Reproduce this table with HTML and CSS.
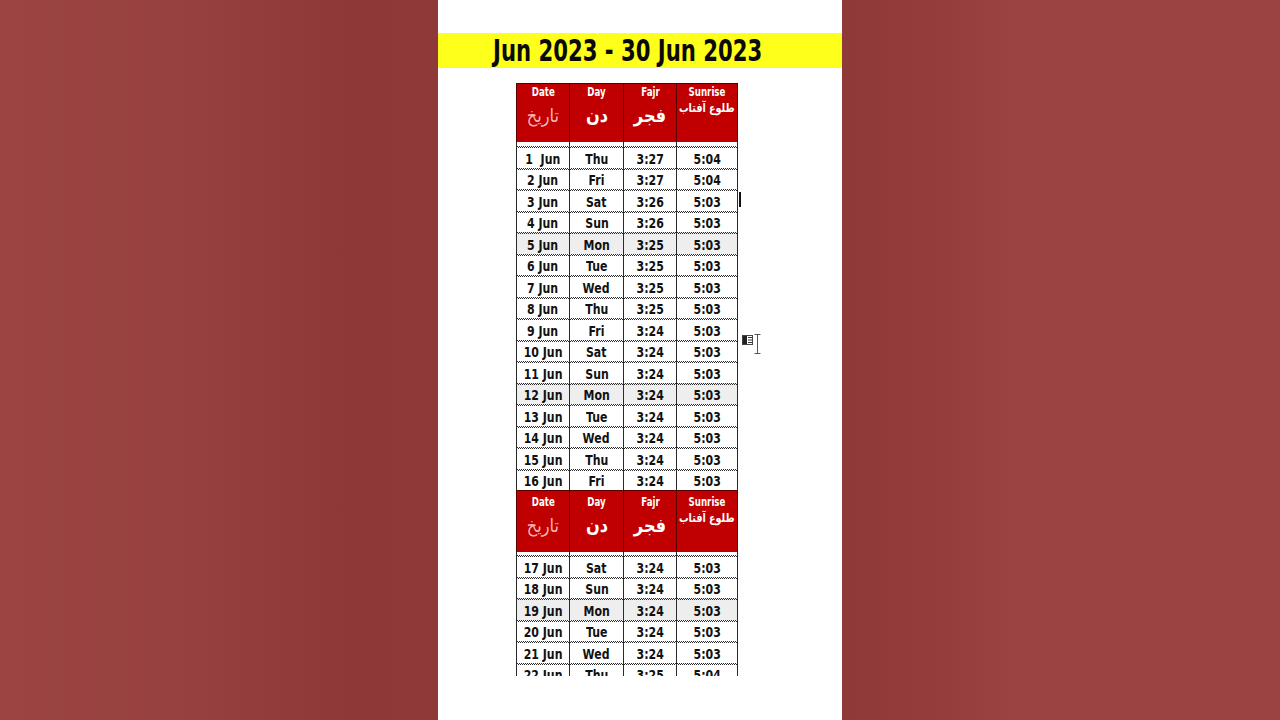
FILE: index.html
```html
<!DOCTYPE html>
<html lang="en">
<head>
<meta charset="utf-8">
<title>Prayer times June 2023</title>
<link rel="stylesheet" href="styles.css">
</head>
<body>
<div class="screen">
  <div class="side side-left"></div>
  <div class="panel">
    <div class="band"><span class="title">Jun 2023 - 30 Jun 2023</span></div>
    <div class="sheet">
      <div class="head">
        <div class="hc"><span class="en">Date</span><span class="ar ar-thin">تاریخ</span></div>
        <div class="hc"><span class="en">Day</span><span class="ar">دن</span></div>
        <div class="hc"><span class="en">Fajr</span><span class="ar">فجر</span></div>
        <div class="hc"><span class="en">Sunrise</span><span class="ar ar-small">طلوع آفتاب</span></div>
      </div>
      <div class="gap"><div></div><div></div><div></div><div></div></div>
      <div class="row"><div><span>1&nbsp;&nbsp;Jun</span></div><div><span>Thu</span></div><div><span>3:27</span></div><div><span>5:04</span></div></div>
      <div class="row"><div><span>2 Jun</span></div><div><span>Fri</span></div><div><span>3:27</span></div><div><span>5:04</span></div></div>
      <div class="row"><div><span>3 Jun</span></div><div><span>Sat</span></div><div><span>3:26</span></div><div><span>5:03</span></div></div>
      <div class="row"><div><span>4 Jun</span></div><div><span>Sun</span></div><div><span>3:26</span></div><div><span>5:03</span></div></div>
      <div class="row shade"><div><span>5 Jun</span></div><div><span>Mon</span></div><div><span>3:25</span></div><div><span>5:03</span></div></div>
      <div class="row"><div><span>6 Jun</span></div><div><span>Tue</span></div><div><span>3:25</span></div><div><span>5:03</span></div></div>
      <div class="row"><div><span>7 Jun</span></div><div><span>Wed</span></div><div><span>3:25</span></div><div><span>5:03</span></div></div>
      <div class="row"><div><span>8 Jun</span></div><div><span>Thu</span></div><div><span>3:25</span></div><div><span>5:03</span></div></div>
      <div class="row"><div><span>9 Jun</span></div><div><span>Fri</span></div><div><span>3:24</span></div><div><span>5:03</span></div></div>
      <div class="row"><div><span>10 Jun</span></div><div><span>Sat</span></div><div><span>3:24</span></div><div><span>5:03</span></div></div>
      <div class="row"><div><span>11 Jun</span></div><div><span>Sun</span></div><div><span>3:24</span></div><div><span>5:03</span></div></div>
      <div class="row shade"><div><span>12 Jun</span></div><div><span>Mon</span></div><div><span>3:24</span></div><div><span>5:03</span></div></div>
      <div class="row"><div><span>13 Jun</span></div><div><span>Tue</span></div><div><span>3:24</span></div><div><span>5:03</span></div></div>
      <div class="row"><div><span>14 Jun</span></div><div><span>Wed</span></div><div><span>3:24</span></div><div><span>5:03</span></div></div>
      <div class="row"><div><span>15 Jun</span></div><div><span>Thu</span></div><div><span>3:24</span></div><div><span>5:03</span></div></div>
      <div class="row"><div><span>16 Jun</span></div><div><span>Fri</span></div><div><span>3:24</span></div><div><span>5:03</span></div></div>
      <div class="head head-2">
        <div class="hc"><span class="en">Date</span><span class="ar ar-thin">تاریخ</span></div>
        <div class="hc"><span class="en">Day</span><span class="ar">دن</span></div>
        <div class="hc"><span class="en">Fajr</span><span class="ar">فجر</span></div>
        <div class="hc"><span class="en">Sunrise</span><span class="ar ar-small">طلوع آفتاب</span></div>
      </div>
      <div class="gap gap-2"><div></div><div></div><div></div><div></div></div>
      <div class="row"><div><span>17 Jun</span></div><div><span>Sat</span></div><div><span>3:24</span></div><div><span>5:03</span></div></div>
      <div class="row"><div><span>18 Jun</span></div><div><span>Sun</span></div><div><span>3:24</span></div><div><span>5:03</span></div></div>
      <div class="row shade"><div><span>19 Jun</span></div><div><span>Mon</span></div><div><span>3:24</span></div><div><span>5:03</span></div></div>
      <div class="row"><div><span>20 Jun</span></div><div><span>Tue</span></div><div><span>3:24</span></div><div><span>5:03</span></div></div>
      <div class="row"><div><span>21 Jun</span></div><div><span>Wed</span></div><div><span>3:24</span></div><div><span>5:03</span></div></div>
      <div class="row"><div><span>22 Jun</span></div><div><span>Thu</span></div><div><span>3:25</span></div><div><span>5:04</span></div></div>
    </div>
    <span class="caret"></span>
    <span class="paste-icon">
      <svg width="11" height="10" viewBox="0 0 11 10">
        <rect x="0.5" y="0.5" width="10" height="9" fill="#fff" stroke="#444"/>
        <rect x="1" y="1" width="4" height="8" fill="#222"/>
        <path d="M6 2.5h4M6 5h4M6 7.5h4" stroke="#333" stroke-width="1"/>
      </svg>
    </span>
    <span class="ibeam">
      <svg width="7" height="20" viewBox="0 0 7 20">
        <path d="M0.5 0.5h6M3.5 0.5v19M0.5 19.5h6" stroke="#555" stroke-width="1" fill="none"/>
      </svg>
    </span>
  </div>
  <div class="side side-right"></div>
</div>
</body>
</html>
```

FILE: styles.css
```css
* { box-sizing: border-box; }

html, body {
  margin: 0;
  padding: 0;
}

body {
  width: 1280px;
  height: 720px;
  overflow: hidden;
  font-family: "DejaVu Sans Condensed", "DejaVu Sans", sans-serif;
}

.screen {
  display: flex;
  width: 1280px;
  height: 720px;
}

.side {
  width: 438px;
  height: 720px;
  flex: none;
}

.side-left {
  background: linear-gradient(to right, #9b4442 0%, #974140 40%, #8e3838 80%, #8f3938 100%);
}

.side-right {
  background: linear-gradient(to right, #8f3938 0%, #933c3b 20%, #9a4342 40%, #9a4342 100%);
}

.panel {
  position: relative;
  width: 404px;
  height: 720px;
  flex: none;
  background: #ffffff;
  overflow: hidden;
}

.band {
  margin-top: 33px;
  height: 35px;
  background: #ffff1c;
  padding-left: 55px;
  display: flex;
  align-items: center;
}

.title {
  display: inline-block;
  font-family: "DejaVu Sans Condensed", "DejaVu Sans", sans-serif;
  font-weight: bold;
  font-size: 30px;
  line-height: 35px;
  color: #0a0a0a;
  transform: scaleX(0.785);
  transform-origin: left center;
  white-space: nowrap;
}

.sheet {
  margin-top: 15px;
  margin-left: 78px;
  width: 222px;
  height: 593px;
  overflow: hidden;
}

.head,
.gap,
.row {
  display: grid;
  grid-template-columns: 53px 54px 53px 62px;
}

.head {
  height: 59px;
  background: #c00000;
  border-top: 1px solid #5a0000;
}

.head-2 {
  height: 62px;
}

.hc {
  display: flex;
  flex-direction: column;
  align-items: center;
  border-left: 1px solid #5a0000;
  padding-top: 1px;
  color: #ffffff;
}

.head-2 .hc {
  padding-top: 4px;
}

.hc:last-child {
  border-right: 1px solid #5a0000;
}

.en {
  display: inline-block;
  font-weight: bold;
  font-size: 12px;
  line-height: 15px;
  transform: scaleX(0.8);
  white-space: nowrap;
}

.ar {
  display: inline-block;
  font-family: "DejaVu Sans", sans-serif;
  font-weight: bold;
  font-size: 19px;
  line-height: 26px;
  margin-top: 2px;
  white-space: nowrap;
  direction: rtl;
  transform: scaleX(0.85);
}

.ar-thin {
  font-weight: normal;
  color: #f5b4b4;
}

.ar-small {
  font-size: 12px;
  line-height: 16px;
  margin-top: 0;
  transform: scaleX(0.8);
}

.gap {
  height: 4px;
}

.gap-2 {
  height: 3px;
}

.gap > div,
.row > div {
  border-left: 1px solid #2a2a2a;
}

.gap > div:last-child,
.row > div:last-child {
  border-right: 1px solid #2a2a2a;
}

.row {
  height: 21.5px;
  background-image: repeating-conic-gradient(#2a2a2a 0 25%, transparent 0 50%);
  background-size: 2px 2px;
  background-repeat: repeat-x;
  background-position: 0 0;
  background-color: #ffffff;
}

.row.shade {
  background-color: #eeeeee;
}

.row > div {
  display: flex;
  align-items: center;
  justify-content: center;
  padding-top: 4px;
}

.row span {
  display: inline-block;
  font-weight: bold;
  font-size: 14.5px;
  line-height: 16px;
  color: #111111;
  transform: scaleX(0.84);
  white-space: nowrap;
}

.caret {
  position: absolute;
  left: 301px;
  top: 192px;
  width: 2px;
  height: 15px;
  background: #111111;
}

.paste-icon {
  position: absolute;
  left: 304px;
  top: 335px;
  width: 11px;
  height: 10px;
  display: block;
  line-height: 0;
}

.ibeam {
  position: absolute;
  left: 316px;
  top: 334px;
  width: 7px;
  height: 20px;
  display: block;
  line-height: 0;
}
```
